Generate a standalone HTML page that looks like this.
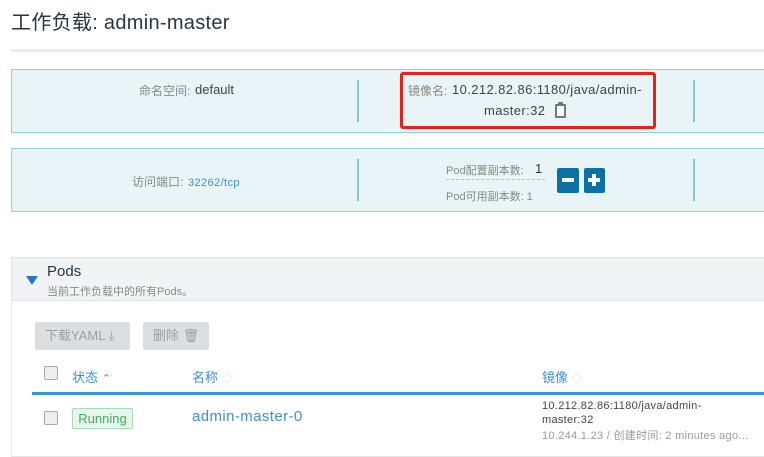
<!DOCTYPE html>
<html><head><meta charset="utf-8"><style>
*{margin:0;padding:0;box-sizing:border-box}
body{width:764px;height:450px;overflow:hidden;background:#fff;font-family:"Liberation Sans","Noto Sans CJK SC",sans-serif;color:#333;position:relative}
.a{position:absolute;white-space:nowrap}
.box{position:absolute;left:11px;width:770px;background:#e8f4f6;border:1px solid #8fd0d6}
.div{position:absolute;width:2px;background:#7ec8cf}
.lbl{color:#888;font-size:12px}
.btn{position:absolute;background:#dcdfe1;border-radius:2px;color:#9aa0a4;font-size:13px;line-height:28px;height:28px}
.cb{position:absolute;width:14px;height:14px;border:1px solid #aaa;border-radius:2px;background:#eee}
.blue{color:#3d8fd8}
</style></head><body>
<div class="a" style="left:11px;top:6px;font-size:20px;color:#2a3540;letter-spacing:0.3px">工作负载: admin-master</div>
<div class="a" style="left:11px;top:49px;width:760px;height:3px;background:#e9ecec"></div>

<div class="box" style="top:69px;height:64px"></div>
<div class="div" style="left:357px;top:80px;height:42px"></div>
<div class="div" style="left:693px;top:80px;height:42px"></div>
<div class="a lbl" style="left:139px;top:82px">命名空间:</div>
<div class="a" style="left:195px;top:82px;font-size:13px;color:#3a4550">default</div>
<div class="a" style="left:400px;top:72px;width:256px;height:57px;border:3px solid #e8211c;border-radius:3px"></div>
<div class="a lbl" style="left:408px;top:82px">镜像名:</div>
<div class="a" style="left:452px;top:82px;font-size:13px;color:#3a4550;letter-spacing:0.4px">10.212.82.86:1180/java/admin-</div>
<div class="a" style="left:484px;top:103px;font-size:13px;color:#3a4550;letter-spacing:0.4px">master:32</div>
<div class="a" style="left:555px;top:104px;width:11px;height:14px;border:2px solid #777;border-radius:1px;background:#fff"></div>
<div class="a" style="left:558px;top:102px;width:5px;height:3px;background:#777"></div>

<div class="box" style="top:148px;height:64px"></div>
<div class="div" style="left:357px;top:159px;height:42px"></div>
<div class="div" style="left:693px;top:159px;height:42px"></div>
<div class="a lbl" style="left:132px;top:173px">访问端口:</div>
<div class="a blue" style="left:188px;top:177px;font-size:11px;letter-spacing:0.4px">32262/tcp</div>
<div class="a lbl" style="left:446px;top:162px;font-size:11px">Pod配置副本数:</div>
<div class="a" style="left:535px;top:161px;font-size:13px">1</div>
<div class="a" style="left:446px;top:179px;width:99px;border-top:1px dashed #8fd0d6"></div>
<div class="a lbl" style="left:446px;top:188px;font-size:11px">Pod可用副本数: 1</div>
<div class="a" style="left:557px;top:168px;width:22px;height:25px;background:#0d70a3;border-radius:2px"><div class="a" style="left:5px;top:10px;width:12px;height:4px;background:#fff"></div></div>
<div class="a" style="left:584px;top:168px;width:21px;height:25px;background:#0d70a3;border-radius:2px"><div class="a" style="left:4px;top:10px;width:12px;height:4px;background:#fff"></div><div class="a" style="left:8px;top:6px;width:4px;height:12px;background:#fff"></div></div>

<div class="a" style="left:11px;top:257px;width:770px;height:200px;border:1px solid #e3e6e8"></div>
<div class="a" style="left:12px;top:258px;width:760px;height:43px;background:#f1f3f4;border-bottom:1px solid #e0e3e5"></div>
<div class="a" style="left:26px;top:276px;width:0;height:0;border-left:6px solid transparent;border-right:6px solid transparent;border-top:9px solid #1a7ad4"></div>
<div class="a" style="left:47px;top:263px;font-size:15px;color:#2a3540">Pods</div>
<div class="a" style="left:47px;top:283px;font-size:11px;color:#888">当前工作负载中的所有Pods。</div>

<div class="btn" style="left:35px;top:322px;width:95px;padding-left:10px">下载YAML ⤓</div>
<div class="btn" style="left:143px;top:322px;width:66px;padding-left:10px">删除 🗑</div>

<div class="cb" style="left:44px;top:366px"></div>
<div class="a blue" style="left:72px;top:367px;font-size:13px">状态 <span style="font-size:11px">⌃</span></div>
<div class="a blue" style="left:192px;top:367px;font-size:13px">名称 <span style="color:#c5dcf0;font-size:11px">◇</span></div>
<div class="a blue" style="left:542px;top:367px;font-size:13px">镜像 <span style="color:#c5dcf0;font-size:11px">◇</span></div>
<div class="a" style="left:32px;top:392px;width:740px;height:3px;background:#3593d8"></div>

<div class="cb" style="left:44px;top:411px"></div>
<div class="a" style="left:72px;top:408px;width:61px;height:21px;background:#e6f6ea;border:1px solid #a6dcb5;border-radius:2px;color:#4aa862;font-size:13px;line-height:19px;text-align:center">Running</div>
<div class="a blue" style="left:192px;top:408px;font-size:15px;letter-spacing:0.4px">admin-master-0</div>
<div class="a" style="left:542px;top:400px;font-size:11px;color:#444;letter-spacing:0.3px">10.212.82.86:1180/java/admin-</div>
<div class="a" style="left:542px;top:414px;font-size:11px;color:#444;letter-spacing:0.3px">master:32</div>
<div class="a" style="left:542px;top:427px;font-size:11px;color:#999;letter-spacing:0.3px">10.244.1.23 / 创建时间: 2 minutes ago...</div>
</body></html>
